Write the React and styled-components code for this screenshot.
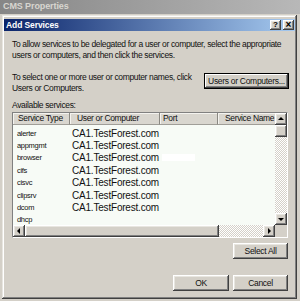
import React from 'react'
import styled, { createGlobalStyle } from 'styled-components'

const GlobalStyle = createGlobalStyle`
  html, body {
    margin: 0;
    padding: 0;
    background: #d4d0c8;
  }
  * {
    box-sizing: border-box;
  }
`

const services = [
  { type: 'alerter', host: 'CA1.TestForest.com' },
  { type: 'appmgmt', host: 'CA1.TestForest.com' },
  { type: 'browser', host: 'CA1.TestForest.com', masked: true },
  { type: 'cifs', host: 'CA1.TestForest.com' },
  { type: 'cisvc', host: 'CA1.TestForest.com' },
  { type: 'clipsrv', host: 'CA1.TestForest.com' },
  { type: 'dcom', host: 'CA1.TestForest.com' },
  { type: 'dhcp', host: '' },
]

const columns = [
  { label: 'Service Type', pad: 5 },
  { label: 'User or Computer', pad: 7 },
  { label: 'Port', pad: 3 },
  { label: 'Service Name', pad: 7 },
]

function App() {
  return (
    <>
      <GlobalStyle />
      <Page>
        <ParentBar>CMS Properties</ParentBar>
        <Dialog>
          <TitleBar>
            <Title>Add Services</Title>
            <CaptionButtons>
              <CaptionButton>?</CaptionButton>
              <CaptionButton $close>×</CaptionButton>
            </CaptionButtons>
          </TitleBar>
          <Body>
            <Para>
              To allow services to be delegated for a user or computer, select the appropriate
              users or computers, and then click the services.
            </Para>
            <SelectRow>
              <Para $narrow>
                To select one or more user or computer names, click Users or Computers.
              </Para>
              <Button $width={85} $default>Users or Computers...</Button>
            </SelectRow>
            <Label>Available services:</Label>
            <ListBox>
              <Viewport>
                <HeaderRow>
                  {columns.map((c) => (
                    <HeaderCell key={c.label} $pad={c.pad}>{c.label}</HeaderCell>
                  ))}
                </HeaderRow>
                <Rows>
                  {services.map((s) => (
                    <Row key={s.type}>
                      <TypeCell>{s.type}</TypeCell>
                      <HostCell>{s.host}</HostCell>
                      <PortCell>{s.masked && <Mask />}</PortCell>
                      <span />
                    </Row>
                  ))}
                </Rows>
              </Viewport>
              <VScroll>
                <ArrowButton><Arrow $dir="up" /></ArrowButton>
                <Thumb $v />
                <Track />
                <ArrowButton><Arrow $dir="down" /></ArrowButton>
              </VScroll>
              <HScroll>
                <ArrowButton><Arrow $dir="left" /></ArrowButton>
                <Thumb $w={194} />
                <Track />
                <ArrowButton><Arrow $dir="right" /></ArrowButton>
              </HScroll>
              <Corner />
            </ListBox>
            <ButtonRow $top={4}>
              <Button $width={55}>Select All</Button>
            </ButtonRow>
            <ButtonRow $top={15}>
              <Button $width={56}>OK</Button>
              <Button $width={55}>Cancel</Button>
            </ButtonRow>
          </Body>
        </Dialog>
      </Page>
    </>
  )
}

export default App

const raised = `
  background: #d4d0c8;
  box-shadow: inset -1px -1px #404040, inset 1px 1px #ffffff,
    inset -2px -2px #808080, inset 2px 2px #e8e6e0;
`

const Page = styled.div`
  width: 300px;
  height: 301px;
  overflow: hidden;
  background: #d4d0c8;
  font-family: "Liberation Sans", Arial, sans-serif;
  color: #111;
`

const ParentBar = styled.div`
  height: 14px;
  padding-left: 3px;
  background: linear-gradient(to right, #868686, #b8b8b8);
  color: #d8d6d0;
  font-weight: bold;
  font-size: 9px;
  line-height: 12px;
  letter-spacing: -0.1px;
`

const Dialog = styled.div`
  margin: 1px 3px 0 2px;
  height: 284px;
  padding: 2px;
  display: flex;
  flex-direction: column;
  background: #d4d0c8;
  box-shadow: inset -1px -1px #404040, inset 1px 1px #e8e6e0,
    inset -2px -2px #808080, inset 2px 2px #ffffff;
`

const TitleBar = styled.div`
  height: 12px;
  margin-top: 2px;
  padding: 0 1px 0 2px;
  display: flex;
  align-items: center;
  justify-content: space-between;
  background: linear-gradient(to right, #0a246a, #a6caf0);
`

const Title = styled.span`
  color: #fff;
  font-weight: bold;
  font-size: 8.5px;
  letter-spacing: -0.1px;
`

const CaptionButtons = styled.div`
  display: flex;
  gap: 2px;
`

const CaptionButton = styled.div`
  ${raised}
  width: 11px;
  height: 10px;
  display: flex;
  align-items: center;
  justify-content: center;
  font-weight: bold;
  font-size: ${(p) => (p.$close ? '10px' : '8px')};
  line-height: 1;
  color: #000;
`

const Body = styled.div`
  flex: 1;
  display: flex;
  flex-direction: column;
  padding: 8px 6px 0 8px;
`

const Para = styled.div`
  font-size: 8.5px;
  line-height: 11px;
  letter-spacing: -0.35px;
  ${(p) => (p.$narrow ? 'flex: 1; padding-right: 8px;' : '')}
`

const SelectRow = styled.div`
  display: flex;
  align-items: flex-start;
  margin-top: 11px;
`

const Button = styled.div`
  ${raised}
  width: ${(p) => p.$width}px;
  height: 16px;
  margin-top: 1px;
  display: flex;
  align-items: center;
  justify-content: center;
  font-size: 8.5px;
  letter-spacing: -0.3px;
  color: #111;
  ${(p) =>
    p.$default
      ? `box-shadow: inset 0 0 0 1px #000, inset -2px -2px #404040, inset 2px 2px #ffffff,
          inset -3px -3px #808080;`
      : ''}
`

const Label = styled.div`
  margin-top: 6px;
  font-size: 8.5px;
  line-height: 11px;
  letter-spacing: -0.35px;
`

const ListBox = styled.div`
  margin-top: 1px;
  margin-right: 1px;
  height: 126px;
  border: 1px solid;
  border-color: #808080 #ffffff #ffffff #808080;
  display: grid;
  grid-template-columns: 1fr 12px;
  grid-template-rows: 1fr 12px;
  background: #f7fbf6;
`

const Viewport = styled.div`
  overflow: hidden;
`

const HeaderRow = styled.div`
  display: grid;
  grid-template-columns: 57px 90px 58px 58px;
  height: 12px;
`

const HeaderCell = styled.div`
  background: #d9d6cf;
  border-right: 1px solid #8a8882;
  border-bottom: 1px solid #a09e98;
  box-shadow: inset 1px 1px #f4f3ef;
  padding-left: ${(p) => p.$pad}px;
  font-size: 8.5px;
  line-height: 11px;
  letter-spacing: -0.35px;
  white-space: nowrap;
  overflow: hidden;
`

const Rows = styled.div`
  padding-top: 2px;
`

const Row = styled.div`
  display: grid;
  grid-template-columns: 57px 90px 58px 58px;
  height: 12.4px;
  align-items: center;
`

const TypeCell = styled.span`
  padding-left: 4px;
  font-size: 7.5px;
  line-height: 9px;
  letter-spacing: -0.3px;
`

const HostCell = styled.span`
  padding-left: 2px;
  font-size: 10px;
  line-height: 11px;
  letter-spacing: -0.2px;
  white-space: nowrap;
`

const PortCell = styled.span`
  display: flex;
  align-items: center;
`

const Mask = styled.span`
  width: 33px;
  height: 7px;
  margin-left: 2px;
  background: #ffffff;
`

const VScroll = styled.div`
  display: flex;
  flex-direction: column;
`

const HScroll = styled.div`
  display: flex;
`

const ArrowButton = styled.div`
  ${raised}
  flex: 0 0 12px;
  width: 12px;
  height: 12px;
  display: flex;
  align-items: center;
  justify-content: center;
`

const Arrow = styled.span`
  width: 0;
  height: 0;
  border: 3px solid transparent;
  ${(p) => p.$dir === 'up' && 'border-bottom: 3px solid #000; border-top-width: 0; margin-top: -1px;'}
  ${(p) => p.$dir === 'down' && 'border-top: 3px solid #000; border-bottom-width: 0; margin-top: 1px;'}
  ${(p) => p.$dir === 'left' && 'border-right: 3px solid #000; border-left-width: 0; margin-left: -1px;'}
  ${(p) => p.$dir === 'right' && 'border-left: 3px solid #000; border-right-width: 0; margin-left: 1px;'}
`

const Thumb = styled.div`
  ${raised}
  flex: 0 0 ${(p) => (p.$v ? 12 : p.$w)}px;
`

const Track = styled.div`
  flex: 1;
  background-color: #ffffff;
  background-image: conic-gradient(#d4d0c8 25%, transparent 0 50%, #d4d0c8 0 75%, transparent 0);
  background-size: 2px 2px;
`

const Corner = styled.div`
  background: #d4d0c8;
`

const ButtonRow = styled.div`
  display: flex;
  justify-content: flex-end;
  gap: 4px;
  margin-top: ${(p) => p.$top}px;
  margin-right: 1px;
`
